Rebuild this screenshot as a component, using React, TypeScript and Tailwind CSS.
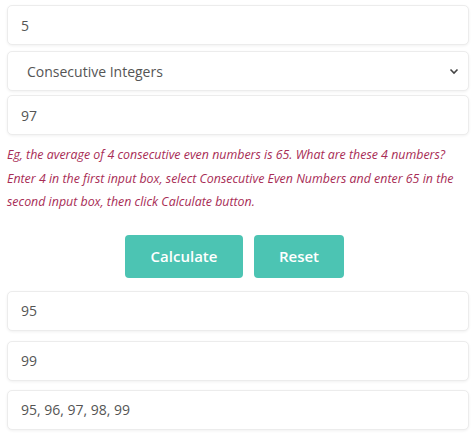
import React from "react";

const box =
  "h-[40px] w-full rounded-[5px] border border-[#ececec] bg-white shadow-[0_1px_3px_rgba(0,0,0,0.06)] flex items-center text-[14px] text-[#555]";

export default function App() {
  return (
    <div
      className="w-[474px] h-[440px] bg-white px-[7px] pt-[5px] pr-[5px]"
      style={{ fontFamily: '"Open Sans", "Noto Sans", sans-serif' }}
    >
      <div className={box + " pl-[13px]"}>5</div>
      <div className={box + " mt-[6px] pl-[19px] pr-[8px] justify-between text-[#444]"}>
        <span>Consecutive Integers</span>
        <svg width="10" height="7" viewBox="0 0 10 7" className="mr-[1px]">
          <path d="M1.5 1.5 L5 5 L8.5 1.5" fill="none" stroke="#444" strokeWidth="1.6" />
        </svg>
      </div>
      <div className={box + " mt-[4px] pl-[13px]"}>97</div>

      <p className="mt-[8px] text-[12.4px] italic leading-[23.5px] text-[#a82c55]">
        Eg, the average of 4 consecutive even numbers is 65. What are these 4 numbers? Enter 4 in the first input box, select Consecutive Even Numbers and enter 65 in the second input box, then click Calculate button.
      </p>

      <div className="mt-[21px] flex justify-center gap-[11px] pr-[7px]">
        <button className="h-[43px] w-[118px] rounded-[4px] bg-[#4cc4b3] text-white text-[15px] font-semibold">
          Calculate
        </button>
        <button className="h-[43px] w-[90px] rounded-[4px] bg-[#4cc4b3] text-white text-[15px] font-semibold">
          Reset
        </button>
      </div>

      <div className={box + " mt-[13px] pl-[13px]"}>95</div>
      <div className={box + " mt-[10px] pl-[13px]"}>99</div>
      <div className={box + " mt-[9px] pl-[13px]"}>95, 96, 97, 98, 99</div>
    </div>
  );
}
